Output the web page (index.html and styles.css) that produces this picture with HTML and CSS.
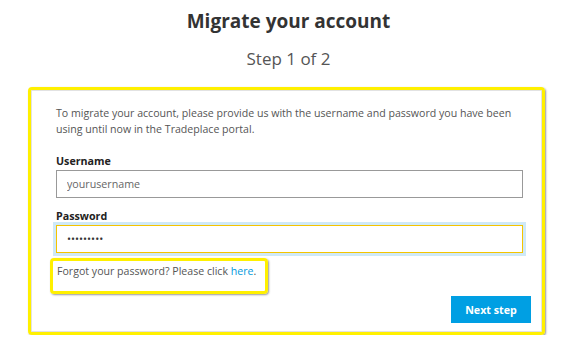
FILE: index.html
```html
<!DOCTYPE html>
<html lang="en">
<head>
    <meta name="viewport" content="width=device-width, initial-scale=1.0">
    <meta charset="UTF-8">
    <title>Migrate your account</title>
    <link rel="stylesheet" href="styles.css">
</head>
<body>
    <h1 class="title">Migrate your account</h1>
    <p class="step">Step 1 of 2</p>

    <div class="panel">
        <p class="intro">To migrate your account, please provide us with the username and password you have been using until now in the Tradeplace portal.</p>

        <label class="field-label" for="username">Username</label>
        <input class="field" type="text" id="username" placeholder="yourusername">

        <label class="field-label" for="password">Password</label>
        <input class="field field-focus" type="password" id="password" value="123456789">

        <p class="forgot">Forgot your password? Please click <a href="#">here</a>.</p>

        <div class="actions">
            <button class="next-button">Next step</button>
        </div>
    </div>
</body>
</html>
```

FILE: styles.css
```css
body {
    font-family: "Open Sans", Arial, sans-serif;
    margin: 0;
    padding: 0;
    background-color: #fff;
    color: #555;
}

.title {
    margin: 8px 0 0;
    padding-left: 12px;
    font-size: 19px;
    line-height: 26px;
    font-weight: 700;
    color: #333;
    text-align: center;
}

.step {
    margin: 13px 0 0;
    padding-left: 12px;
    font-size: 17px;
    line-height: 23px;
    color: #555;
    text-align: center;
}

.panel {
    display: flex;
    flex-direction: column;
    align-items: flex-start;
    margin: 17px 20px 0 28px;
    padding: 15px 11px 9px 25px;
    border: 3px solid #fff000;
    border-radius: 4px;
    box-shadow: inset 0 0 0 1px #e2e2e2, 1px 1px 2px #9a9a9a;
}

.intro {
    margin: 0;
    font-size: 10.6px;
    line-height: 16px;
}

.field-label {
    margin-top: 16px;
    font-size: 10.7px;
    line-height: 16px;
    font-weight: 700;
    color: #222;
}

.field-label + .field {
    margin-top: 1px;
}

.field {
    box-sizing: border-box;
    width: 467px;
    height: 28px;
    padding: 0 10px;
    border: 1px solid #999;
    border-radius: 0;
    font-family: "Open Sans", Arial, sans-serif;
    font-size: 10.7px;
    color: #333;
    outline: none;
}

.field::placeholder {
    color: #666;
}

.field + .field-label {
    margin-top: 10px;
}

.field-focus {
    margin-top: 2px;
    border-color: #f5c400;
    box-shadow: 0 0 0 3px #cfe9f7;
}

.forgot {
    margin: 5px 0 0 -6px;
    padding: 2px 9px 12px 4px;
    border: 3px solid #fff000;
    border-radius: 4px;
    box-shadow: 1px 1px 2px #9a9a9a;
    font-size: 10.6px;
    line-height: 16px;
}

.forgot a {
    color: #0099dd;
    text-decoration: none;
}

.actions {
    display: flex;
    justify-content: flex-end;
    align-self: stretch;
    margin-top: 2px;
}

.next-button {
    width: 80px;
    height: 27px;
    border: none;
    background-color: #009fe3;
    color: #fff;
    font-family: "Open Sans", Arial, sans-serif;
    font-size: 10.7px;
    font-weight: 700;
    cursor: pointer;
}
```
